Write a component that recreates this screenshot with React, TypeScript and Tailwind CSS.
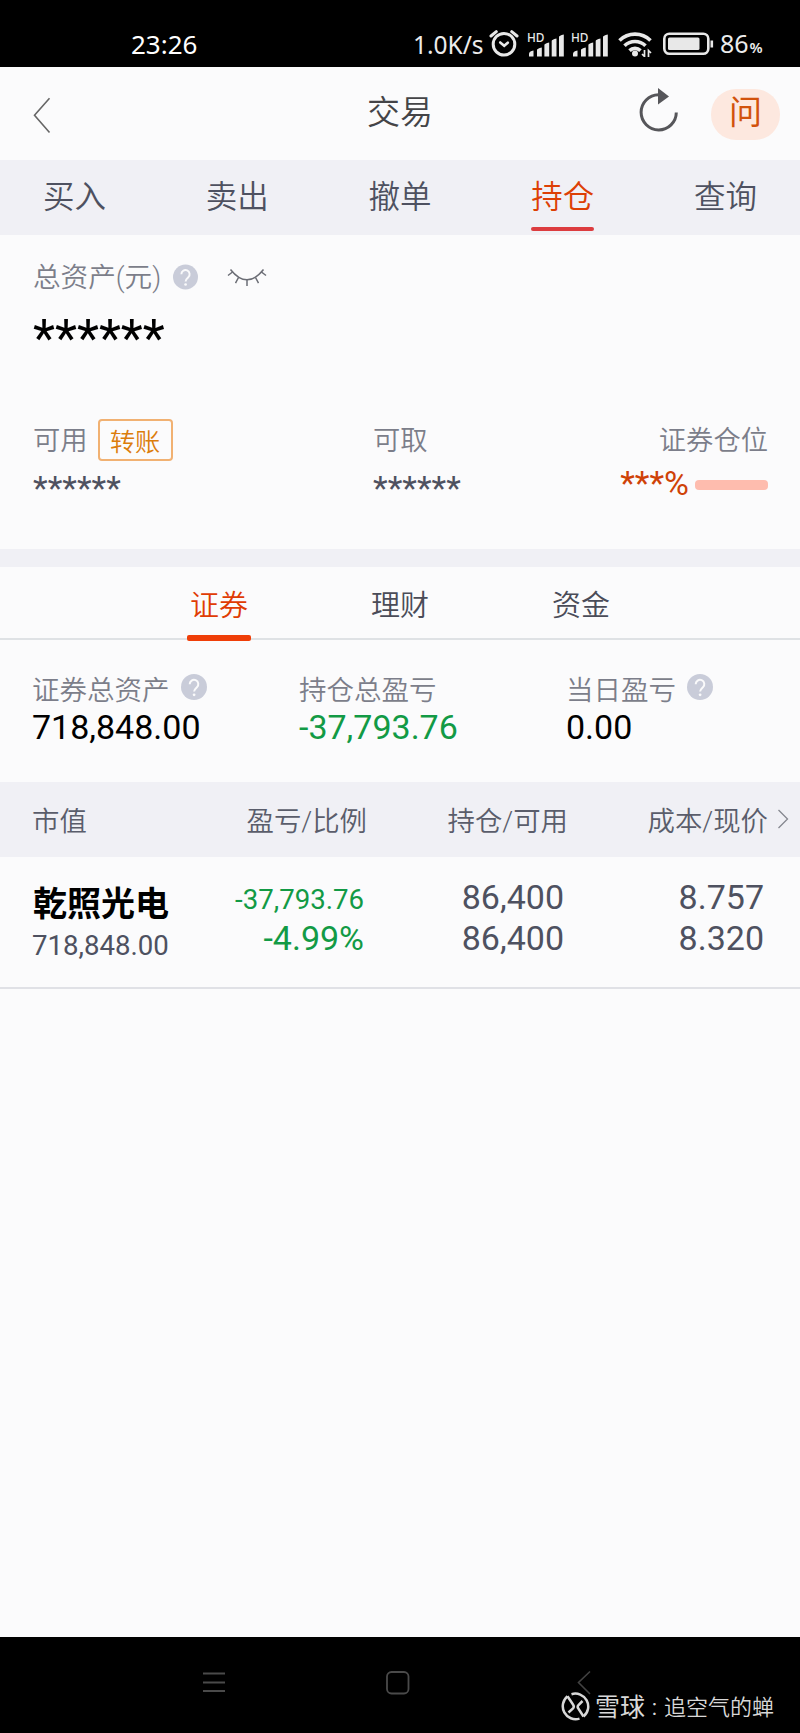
import React from "react";

const NAV_TABS = ["买入", "卖出", "撤单", "持仓", "查询"];
const ASSET_TABS = ["证券", "理财", "资金"];

function HelpIcon({ className }: { className: string }) {
  return (
    <svg viewBox="0 0 26 26" className={className}>
      <circle cx="13" cy="13" r="13" fill="#c9ccd9" />
      <path d="M8.7 10.2a4.3 4.3 0 1 1 7.2 3.1c-1.6 1.4-2.8 2.2-2.8 4.3" fill="none" stroke="#fafafb" strokeWidth="2" />
      <circle cx="13.1" cy="20.8" r="1.4" fill="#fafafb" />
    </svg>
  );
}

function Signal() {
  return (
    <svg viewBox="0 -10 38 36" className="h-[36px] w-[38px]" fill="#e8e8e8">
      <text x="0" y="9.5" fontSize="12" fontWeight="500" fontFamily="Noto Sans, sans-serif" textLength="17.5" lengthAdjust="spacingAndGlyphs">HD</text>
      <path d="M2 24.5v-2.5q0-3 4.5-3.5v6zM10 24.5v-6.5q0-1.5 4.8-2.5v9zM17.4 24.5V13q0-1.5 4.8-2.5v14zM24.7 24.5V9q0-1.5 4.8-2.5v18zM32 24.5V5q0-1.5 4.8-2.5v22z" />
    </svg>
  );
}

function StatusBar() {
  return (
    <div className="flex h-[67px] bg-black pt-[27px] pl-[131px] font-['Noto_Sans',sans-serif] text-[25px] leading-[33px] text-[#ececec]">
      <div className="w-[282px] pt-px text-[26px] text-white">23:26</div>
      <div className="w-[76px] pt-px text-[24.5px] whitespace-nowrap">1.0K/s</div>
      <svg viewBox="0 0 30 28" className="mt-[2px] h-[28px] w-[30px]" fill="none" stroke="#e8e8e8" strokeWidth="3" strokeLinecap="round">
        <circle cx="15" cy="15.2" r="10.8" />
        <path d="M2 7 7.3 2.6M28 7 22.7 2.6" />
        <path d="M11.2 13.5l4 3.2 3.6-3" strokeWidth="2.6" />
      </svg>
      <div className="-mt-[5px] ml-[8px] flex gap-[6px]">
        <Signal />
        <Signal />
      </div>
      <svg viewBox="0 0 34 26" className="mt-[4px] ml-[9px] h-[26px] w-[34px]" fill="none" stroke="#e8e8e8" strokeWidth="3.6">
        <path d="M1.5 9.5a22 22 0 0 1 31 0" />
        <path d="M6.5 14.8a15 15 0 0 1 21 0" />
        <path d="M11.5 19.6a8 8 0 0 1 11 0" />
        <circle cx="17" cy="22.5" r="3" fill="#e8e8e8" stroke="none" />
        <path d="M26.5 19v6.5l-2.5-2.5M30.5 26v-6.5l2.5 2.5" strokeWidth="1.7" />
      </svg>
      <svg viewBox="0 0 51 24" className="mt-[5px] ml-[11px] h-[24px] w-[51px]" fill="none" stroke="#e8e8e8" strokeWidth="2.6">
        <rect x="1.3" y="1.8" width="44" height="20" rx="5" />
        <rect x="5" y="5.5" width="31.5" height="12.5" rx="1.5" fill="#e8e8e8" stroke="none" />
        <path d="M48.8 8.5v7" />
      </svg>
      <div className="ml-[6px] flex items-baseline">
        <span>86</span>
        <span className="ml-px text-[15px] font-semibold">%</span>
      </div>
    </div>
  );
}

function Header() {
  return (
    <header className="flex h-[93px] justify-between pr-[20px] pl-[33px]">
      <div className="w-[180px] pt-[30px]">
        <svg viewBox="0 0 18 37" className="h-[37px] w-[18px]" fill="none" stroke="#666" strokeWidth="1.6">
          <path d="M16.5 1.2 1.5 18.2 16.5 35.6" />
        </svg>
      </div>
      <h1 className="pt-[25px] text-[33px] leading-[42px] font-[350] text-[#444447]">交易</h1>
      <div className="flex w-[193px] justify-end pt-[20px]">
        <svg viewBox="0 0 40 46" className="mr-[32px] h-[46px] w-[40px]">
          <path d="M19.5 7.7A17.6 17.6 0 1 0 37.3 25.5" fill="none" stroke="#56565a" strokeWidth="3" />
          <path d="M19 1 30 9.5 19 17.5z" fill="#56565a" />
        </svg>
        <button className="mt-[2px] h-[51px] w-[69px] rounded-[25px] bg-[#fde8df] pb-[4px] text-[33px] leading-[47px] text-[#d2520c]">问</button>
      </div>
    </header>
  );
}

function NavTabs() {
  return (
    <nav className="flex h-[75px] justify-between bg-[#f0f0f5] px-[43px] pt-[17px] text-[31.5px] leading-[42px] font-[350] text-[#4e5160]">
      {NAV_TABS.map((tab) =>
        tab === "持仓" ? (
          <div key={tab} className="text-[#dd3f05]">
            {tab}
            <div className="mt-[8px] h-[4px] rounded-full bg-[#dc3c3f]" />
          </div>
        ) : (
          <div key={tab}>{tab}</div>
        ),
      )}
    </nav>
  );
}

function Summary() {
  return (
    <section className="h-[314px] pt-[25px] pr-[32px] pl-[33px] font-[350] text-[#7c7e8a]">
      <div className="flex text-[27.6px] leading-[36px]">
        <span>总资产(元)</span>
        <HelpIcon className="mt-[4px] ml-[12px] h-[26px] w-[25px]" />
        <svg viewBox="0 0 40 20" className="mt-[8px] ml-[29px] h-[20px] w-[40px]" fill="none" stroke="#6b6d75" strokeWidth="1.5">
          <path d="M3.5 1.5C9 8.5 14 11.8 20 11.8S31 8.5 36.5 1.5" />
          <path d="M5.5 4 1 7.5M11.5 9.5 8.5 15.2M20 11.8v6.2M28.5 9.5 31.5 15.2M34.5 4 39 7.5" />
        </svg>
      </div>
      <div className="mt-[13px] text-[51px] leading-[60px] font-normal text-black">******</div>
      <div className="mt-[50px] flex text-[27.3px]">
        <div className="w-[340px]">
          <div className="flex h-[42px]">
            <span className="pt-[4px] leading-[36px]">可用</span>
            <button className="ml-[10px] w-[75px] rounded-[4px] border-2 border-[#f1b172] pt-[4px] text-[25.2px] leading-[35px] font-[350] text-[#dc7d0c]">转账</button>
          </div>
          <div className="mt-[7px] text-[34px] leading-[40px] font-normal text-[#4e5160]">******</div>
        </div>
        <div className="grow">
          <div className="h-[42px] pt-[4px] leading-[36px]">可取</div>
          <div className="mt-[7px] text-[34px] leading-[40px] font-normal text-[#4e5160]">******</div>
        </div>
        <div className="flex flex-col items-end">
          <div className="h-[42px] pt-[4px] leading-[36px]">证券仓位</div>
          <div className="mt-[2px] flex items-center text-[34px] leading-[40px] font-normal text-[#cf4207]">
            ***%
            <div className="mt-[4px] ml-[6px] h-[10px] w-[73px] rounded-[4px] bg-[#febcae]" />
          </div>
        </div>
      </div>
    </section>
  );
}

function AssetTabs() {
  return (
    <nav className="flex h-[73px] justify-center gap-[123px] border-b-2 border-[#dfe2e5] pt-[21px] text-[29px] leading-[36px] font-[350] text-[#4a4c58]">
      {ASSET_TABS.map((tab) =>
        tab === "证券" ? (
          <div key={tab} className="w-[58px] text-[#e03c04]">
            {tab}
            <div className="-mx-[3px] mt-[11px] h-[6px] rounded-[2px] bg-[#ef3e08]" />
          </div>
        ) : (
          <div key={tab} className="w-[58px]">{tab}</div>
        ),
      )}
    </nav>
  );
}

function Metric({ label, value, help, className }: { label: string; value: string; help?: boolean; className: string }) {
  return (
    <div className={className}>
      <div className="flex text-[27.5px] leading-[36px] font-[350] text-[#7c7e8a]">
        {label}
        {help && <HelpIcon className="mt-px ml-[11px] h-[26px] w-[26px]" />}
      </div>
      <div className="-mt-px text-[34px] leading-[39px]">{value}</div>
    </div>
  );
}

function Watermark() {
  return (
    <div className="absolute top-[55px] left-[561px] flex text-[22px] leading-[32px] font-[350] text-[#d8d8d8]">
      <svg viewBox="0 0 29 29" className="mr-[5px] h-[29px] w-[29px]" fill="none" stroke="#d8d8d8" strokeWidth="2.5">
        <path d="M10.5 2.2A12.9 12.9 0 0 1 22.5 24.5M18.5 26.6A12.9 12.9 0 0 1 6.5 4.3" />
        <path d="M6.500 4.300 12 12.500c1 1.300 1 2.700 0 3.800L7.500 20.500" />
        <path d="M21.500 9 17.500 13c-1.100 1.200-1.100 2.500 0 3.800L22.500 24.500" />
      </svg>
      <span className="text-[25px] font-normal">雪球</span>
      <span className="w-[19px] text-center font-normal">:</span>
      <span>追空气的蝉</span>
    </div>
  );
}

export default function App() {
  return (
    <div className="flex h-[1733px] w-[800px] flex-col overflow-hidden bg-[#fbfbfc] font-[Roboto,'Noto_Sans_CJK_SC',sans-serif]">
      <StatusBar />
      <Header />
      <NavTabs />
      <Summary />
      <div className="h-[18px] bg-[#f0f0f5]" />
      <AssetTabs />
      <section className="flex h-[142px] pt-[33px] pl-[32px] text-black">
        <Metric label="证券总资产" value="718,848.00" help className="w-[267px]" />
        <Metric label="持仓总盈亏" value="-37,793.76" className="w-[267px] text-[#129a45]" />
        <Metric label="当日盈亏" value="0.00" help className="w-[200px]" />
      </section>
      <div className="flex h-[75px] bg-[#f0f0f5] pt-[22px] pl-[32px] text-right text-[27.4px] leading-[36px] font-[350] text-[#5a5d6b]">
        <div className="w-[121px] text-left">市值</div>
        <div className="w-[214px]">盈亏/比例</div>
        <div className="w-[201px]">持仓/可用</div>
        <div className="w-[200px]">成本/现价</div>
        <svg viewBox="0 0 12 20" className="mt-[5px] ml-[9px] h-[20px] w-[12px]" fill="none" stroke="#85878f" strokeWidth="1.3">
          <path d="M1.5 1 10.5 10 1.5 19" />
        </svg>
      </div>
      <div className="flex h-[132px] border-b-2 border-[#e0e1e6] pl-[32px] text-right text-[34px] leading-[41px] text-[#4e5160]">
        <div className="w-[181px] pt-[27px] text-left">
          <div className="pl-px font-bold text-black">乾照光电</div>
          <div className="mt-[3px] text-[27.6px] leading-[36px]">718,848.00</div>
        </div>
        <div className="w-[151px] pt-[25px] text-[#129a45]">
          <div className="text-[27.6px] leading-[36px]">-37,793.76</div>
          <div>-4.99%</div>
        </div>
        <div className="w-[200px] pt-[20px]">
          <div>86,400</div>
          <div>86,400</div>
        </div>
        <div className="w-[200px] pt-[20px]">
          <div>8.757</div>
          <div>8.320</div>
        </div>
      </div>
      <div className="grow" />
      <footer className="relative flex h-[96px] bg-black pt-[33px] pl-[202px]">
        <svg viewBox="0 0 24 26" className="h-[26px] w-[24px]" stroke="#4a4a4a" strokeWidth="1.8">
          <path d="M1 3.5h22M1 12.5h22M1 21h22" />
        </svg>
        <svg viewBox="0 0 26 26" className="ml-[159px] h-[26px] w-[26px]" fill="none" stroke="#4a4a4a" strokeWidth="1.8">
          <rect x="2" y="2" width="21.5" height="21.5" rx="4.5" />
        </svg>
        <svg viewBox="0 0 14 26" className="ml-[166px] h-[26px] w-[14px]" fill="none" stroke="#424242" strokeWidth="1.6">
          <path d="M13 1.5 1.5 12.5 13 24" />
        </svg>
        <Watermark />
      </footer>
    </div>
  );
}
